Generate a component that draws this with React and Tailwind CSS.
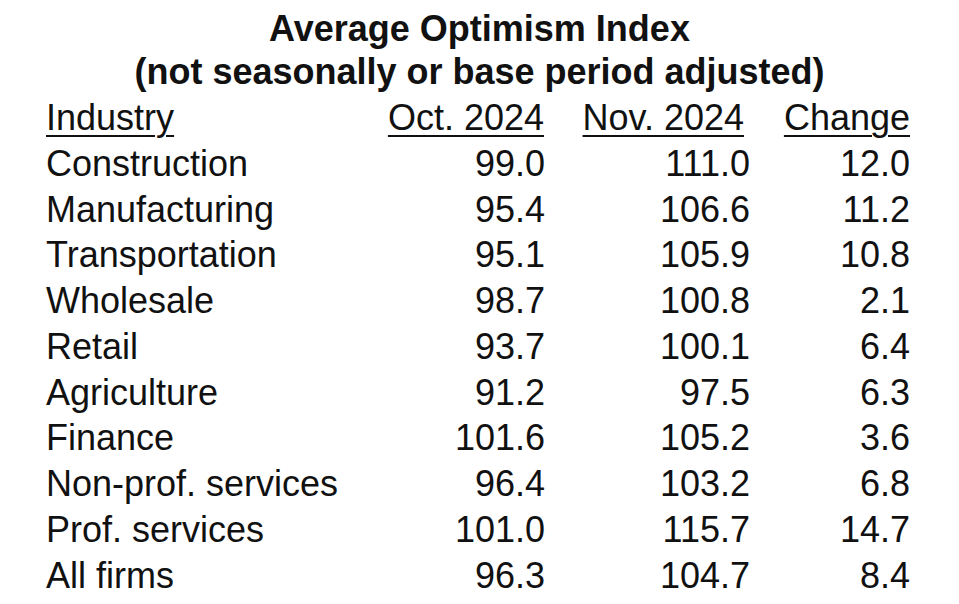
const rows = [
  ["Construction", "99.0", "111.0", "12.0"],
  ["Manufacturing", "95.4", "106.6", "11.2"],
  ["Transportation", "95.1", "105.9", "10.8"],
  ["Wholesale", "98.7", "100.8", "2.1"],
  ["Retail", "93.7", "100.1", "6.4"],
  ["Agriculture", "91.2", "97.5", "6.3"],
  ["Finance", "101.6", "105.2", "3.6"],
  ["Non-prof. services", "96.4", "103.2", "6.8"],
  ["Prof. services", "101.0", "115.7", "14.7"],
  ["All firms", "96.3", "104.7", "8.4"],
];

const App = () => {
  return (
    <div className="w-[959px] h-[604px] bg-white text-[#111] font-['Liberation_Sans',Arial,sans-serif] overflow-hidden pt-[7px]">
      <div className="text-center font-bold text-[36px] leading-[43px]">
        <div>Average Optimism Index</div>
        <div>(not seasonally or base period adjusted)</div>
      </div>

      <div className="mt-[2px] pl-[46px] grid grid-cols-[300px_199px_205px_160px] text-[36px] leading-[45.75px]">
        <div>
          <span className="underline decoration-2 underline-offset-[5px]">Industry</span>
        </div>
        <div className="text-right pr-px">
          <span className="underline decoration-2 underline-offset-[5px]">Oct. 2024</span>
        </div>
        <div className="text-right pr-[6px]">
          <span className="underline decoration-2 underline-offset-[5px]">Nov. 2024</span>
        </div>
        <div className="text-right">
          <span className="underline decoration-2 underline-offset-[5px]">Change</span>
        </div>

        {rows.map((r) => (
          <div key={r[0]} className="contents">
            <div className="whitespace-nowrap">{r[0]}</div>
            <div className="text-right">{r[1]}</div>
            <div className="text-right">{r[2]}</div>
            <div className="text-right">{r[3]}</div>
          </div>
        ))}
      </div>
    </div>
  );
};

export default App;
